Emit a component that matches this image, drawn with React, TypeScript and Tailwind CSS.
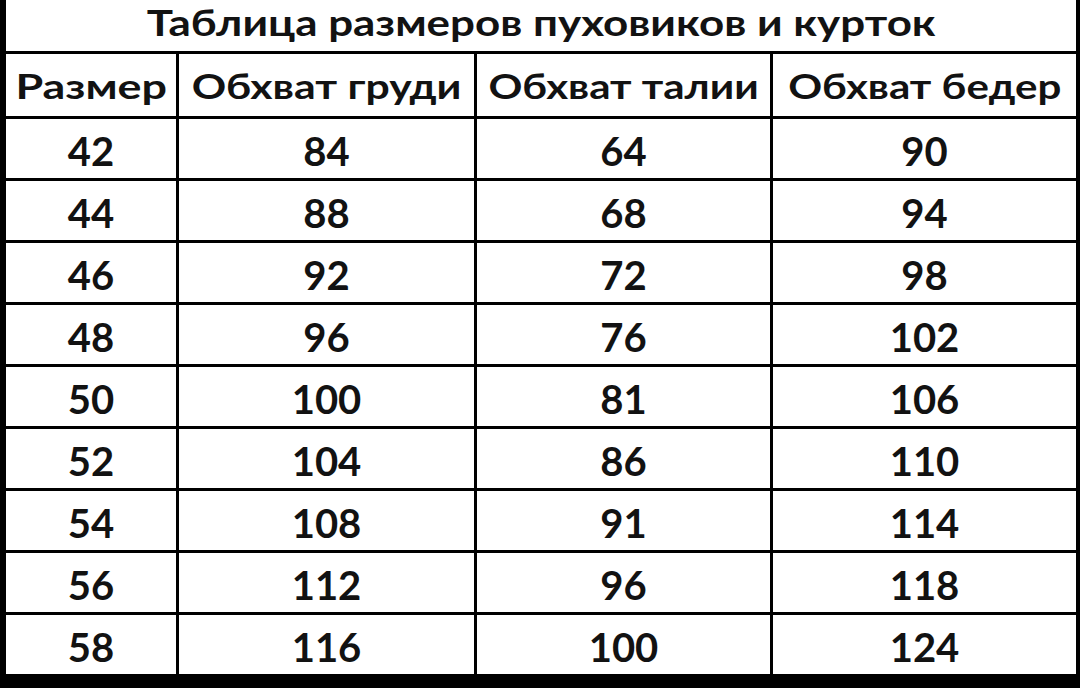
import React from "react";

const rows: [string, string, string, string][] = [
  ["42", "84", "64", "90"],
  ["44", "88", "68", "94"],
  ["46", "92", "72", "98"],
  ["48", "96", "76", "102"],
  ["50", "100", "81", "106"],
  ["52", "104", "86", "110"],
  ["54", "108", "91", "114"],
  ["56", "112", "96", "118"],
  ["58", "116", "100", "124"],
];

const headers: { text: string; cls: string }[] = [
  { text: "Размер", cls: "scale-x-[1.28]" },
  { text: "Обхват груди", cls: "scale-x-[1.22]" },
  { text: "Обхват талии", cls: "scale-x-[1.2]" },
  { text: "Обхват бедер", cls: "scale-x-[1.2]" },
];

export default function App() {
  return (
    <div
      className="w-[1080px] h-[688px] bg-black pl-[6px] pr-[4px] pb-[11px] overflow-hidden text-[#121212]"
      style={{ fontFamily: "Lato, 'Open Sans', sans-serif" }}
    >
      <div className="grid grid-cols-[170px_295px_293px_303px] gap-[3px] grid-rows-[51px_62px_repeat(9,59px)]">
        <div className="col-span-4 bg-white flex items-center justify-center pb-[8px]">
          <span className="inline-block whitespace-nowrap text-[36px] font-bold leading-none scale-x-[1.22]">
            Таблица размеров пуховиков и курток
          </span>
        </div>
        {headers.map((h) => (
          <div key={h.text} className="bg-white flex items-center justify-center overflow-hidden">
            <span
              className={
                "inline-block whitespace-nowrap text-[35px] font-bold leading-none " + h.cls
              }
            >
              {h.text}
            </span>
          </div>
        ))}
        {rows.map((r) =>
          r.map((c, i) => (
            <div
              key={r[0] + "-" + i}
              className="bg-white flex items-center justify-center text-[40px] font-bold leading-none pt-[4px]"
            >
              {c}
            </div>
          ))
        )}
      </div>
    </div>
  );
}
